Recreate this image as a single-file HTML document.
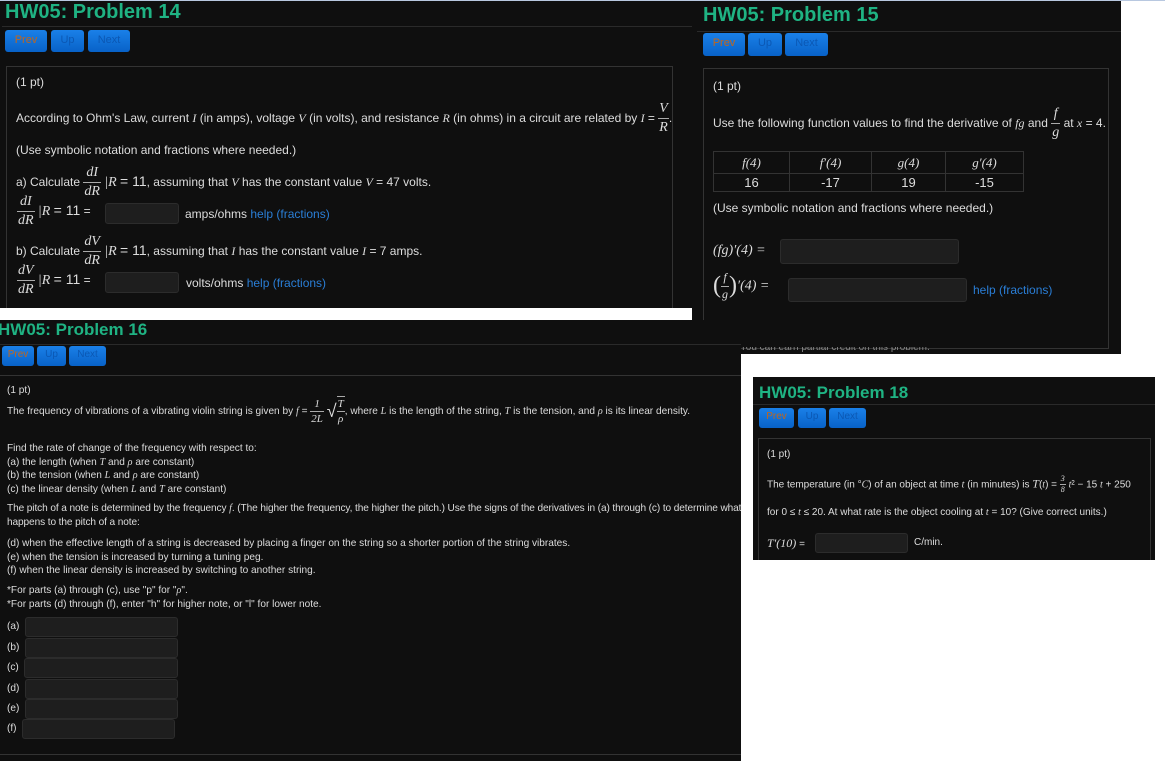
<!DOCTYPE html>
<html><head><meta charset="utf-8"><style>
*{margin:0;padding:0;box-sizing:border-box}
body{width:1165px;height:761px;background:#fff;position:relative;overflow:hidden;font-family:"Liberation Sans",sans-serif;color:#ddd}
.p{position:absolute;background:#0f0f0f}
.a{position:absolute;white-space:nowrap}
.t{position:absolute;color:#1fb383;font-weight:bold;white-space:nowrap}
.hr{position:absolute;height:1px;background:#2a2a2a}
.b{position:absolute;background:linear-gradient(#1a80e8,#0862c8);border-radius:3px;color:#0b58b4;text-align:center}
.b.pr{color:#c0661d}
.box{position:absolute;border:1px solid #333}
.in{position:absolute;background:#1e1e1e;border:1px solid #2c2c2c;border-radius:3px}
.m{font-family:"Liberation Serif",serif;font-style:italic}
.h{color:#2a7ed6}
.fr{display:inline-block;vertical-align:middle;text-align:center;font-family:"Liberation Serif",serif;font-style:italic;line-height:1.3}
.fr span{display:block;padding:0 1px}
.fr span+span{border-top:1px solid #aaa}
table{border-collapse:collapse}
td{border:1px solid #333;text-align:center;color:#ddd}
</style></head><body>
<div style="position:absolute;left:0;top:0;width:1165px;height:1px;background:#b8c8e0"></div>

<!-- Problem 14 -->
<div class="p" style="left:0;top:1px;width:698px;height:307px"></div>
<div class="t" style="left:5px;top:1px;font-size:20px">HW05: Problem 14</div>
<div class="hr" style="left:2px;top:26px;width:694px"></div>
<div class="b pr" style="left:5px;top:30px;width:42px;height:22px;font-size:11px;line-height:20px">Prev</div>
<div class="b" style="left:51px;top:30px;width:33px;height:22px;font-size:11px;line-height:20px">Up</div>
<div class="b" style="left:88px;top:30px;width:42px;height:22px;font-size:11px;line-height:20px">Next</div>
<div class="box" style="left:6px;top:66px;width:667px;height:250px"></div>
<div style="font-size:12px">
<div class="a" style="left:16px;top:75px">(1 pt)</div>
<div class="a" style="left:16px;top:100px">According to Ohm's Law, current <span class="m">I</span> (in amps), voltage <span class="m">V</span> (in volts), and resistance <span class="m">R</span> (in ohms) in a circuit are related by <span class="m">I</span> = <span class="fr" style="font-size:14px"><span>V</span><span>R</span></span>.</div>
<div class="a" style="left:16px;top:143px">(Use symbolic notation and fractions where needed.)</div>
<div class="a" style="left:16px;top:164px">a) Calculate <span class="fr" style="font-size:14px"><span>dI</span><span>dR</span></span> <span class="m" style="font-size:14px">|R</span> <span style="font-size:14px">= 11</span>, assuming that <span class="m">V</span> has the constant value <span class="m">V</span> = 47 volts.</div>
<div class="a" style="left:17px;top:193px"><span class="fr" style="font-size:14px"><span>dI</span><span>dR</span></span> <span class="m" style="font-size:14px">|R</span> <span style="font-size:14px">= 11</span> =</div>
<div class="in" style="left:105px;top:203px;width:74px;height:21px"></div>
<div class="a" style="left:185px;top:207px">amps/ohms <span class="h">help (fractions)</span></div>
<div class="a" style="left:16px;top:233px">b) Calculate <span class="fr" style="font-size:14px"><span>dV</span><span>dR</span></span> <span class="m" style="font-size:14px">|R</span> <span style="font-size:14px">= 11</span>, assuming that <span class="m">I</span> has the constant value <span class="m">I</span> = 7 amps.</div>
<div class="a" style="left:17px;top:262px"><span class="fr" style="font-size:14px"><span>dV</span><span>dR</span></span> <span class="m" style="font-size:14px">|R</span> <span style="font-size:14px">= 11</span> =</div>
<div class="in" style="left:105px;top:272px;width:74px;height:21px"></div>
<div class="a" style="left:186px;top:276px">volts/ohms <span class="h">help (fractions)</span></div>
</div>

<!-- Problem 15 -->
<div class="p" style="left:692px;top:1px;width:429px;height:353px"></div>
<div class="t" style="left:703px;top:4px;font-size:20px">HW05: Problem 15</div>
<div class="hr" style="left:697px;top:31px;width:424px"></div>
<div class="b pr" style="left:703px;top:33px;width:42px;height:23px;font-size:11px;line-height:21px">Prev</div>
<div class="b" style="left:748px;top:33px;width:34px;height:23px;font-size:11px;line-height:21px">Up</div>
<div class="b" style="left:785px;top:33px;width:43px;height:23px;font-size:11px;line-height:21px">Next</div>
<div class="box" style="left:703px;top:68px;width:406px;height:281px"></div>
<div style="font-size:12px">
<div class="a" style="left:713px;top:79px">(1 pt)</div>
<div class="a" style="left:713px;top:105px">Use the following function values to find the derivative of <span class="m">fg</span> and <span class="fr" style="font-size:14px"><span>f</span><span>g</span></span> at <span class="m">x</span> = 4.</div>
<table class="a" style="left:713px;top:151px;width:311px;font-size:13px">
<tr style="height:22px"><td style="width:76px" class="m">f(4)</td><td style="width:82px" class="m">f′(4)</td><td style="width:74px" class="m">g(4)</td><td class="m">g′(4)</td></tr>
<tr style="height:18px"><td>16</td><td>-17</td><td>19</td><td>-15</td></tr></table>
<div class="a" style="left:713px;top:201px">(Use symbolic notation and fractions where needed.)</div>
<div class="a m" style="left:713px;top:243px;font-size:14px">(fg)′(4) =</div>
<div class="in" style="left:780px;top:239px;width:179px;height:25px"></div>
<div class="a m" style="left:713px;top:270px;font-size:14px"><span style="font-size:24px;font-style:normal;vertical-align:middle">(</span><span class="fr" style="font-size:12px"><span>f</span><span>g</span></span><span style="font-size:24px;font-style:normal;vertical-align:middle">)</span>′(4) =</div>
<div class="in" style="left:788px;top:278px;width:179px;height:24px"></div>
<div class="a h" style="left:973px;top:283px">help (fractions)</div>
</div>
<div class="a" style="left:740px;top:347px;width:240px;height:6px;overflow:hidden;font-size:10px;color:#888;line-height:2px">You can earn partial credit on this problem.</div>

<!-- white strip under 14 -->
<div style="position:absolute;left:0;top:308px;width:692px;height:12px;background:#fff"></div>

<!-- Problem 16 -->
<div class="p" style="left:0;top:320px;width:741px;height:441px;overflow:hidden">
<div class="t" style="left:-2px;top:0px;font-size:17px">HW05: Problem 16</div>
<div style="font-size:10.1px">
<div class="a" style="left:7px;top:182px;line-height:13.5px;letter-spacing:-0.1px">The pitch of a note is determined by the frequency <span class="m">f</span>. (The higher the frequency, the higher the pitch.) Use the signs of the derivatives in (a) through (c) to determine what<br>happens to the pitch of a note:</div>
</div>
</div>
<div class="hr" style="left:0;top:344px;width:741px"></div>
<div class="b pr" style="left:2px;top:346px;width:32px;height:20px;font-size:10px;line-height:18px">Prev</div>
<div class="b" style="left:37px;top:346px;width:29px;height:20px;font-size:10px;line-height:18px">Up</div>
<div class="b" style="left:69px;top:346px;width:37px;height:20px;font-size:10px;line-height:18px">Next</div>
<div class="hr" style="left:0;top:375px;width:741px;background:#333"></div>
<div style="font-size:10.1px">
<div class="a" style="left:7px;top:385px">(1 pt)</div>
<div class="a" style="left:7px;top:396px">The frequency of vibrations of a vibrating violin string is given by <span class="m">f</span> = <span class="fr" style="font-size:11px"><span>1</span><span>2L</span></span> <span style="font-size:18px;vertical-align:middle">√</span><span class="fr" style="font-size:11px;border-top:1px solid #aaa"><span>T</span><span class="m">ρ</span></span>, where <span class="m">L</span> is the length of the string, <span class="m">T</span> is the tension, and <span class="m">ρ</span> is its linear density.</div>
<div class="a" style="left:7px;top:442px;line-height:13.5px">Find the rate of change of the frequency with respect to:<br>(a) the length (when <span class="m">T</span> and <span class="m">ρ</span> are constant)<br>(b) the tension (when <span class="m">L</span> and <span class="m">ρ</span> are constant)<br>(c) the linear density (when <span class="m">L</span> and <span class="m">T</span> are constant)</div>
<div class="a" style="left:7px;top:537px;line-height:13.5px">(d) when the effective length of a string is decreased by placing a finger on the string so a shorter portion of the string vibrates.<br>(e) when the tension is increased by turning a tuning peg.<br>(f) when the linear density is increased by switching to another string.</div>
<div class="a" style="left:7px;top:584px;line-height:13.5px">*For parts (a) through (c), use "p" for "<span class="m">ρ</span>".<br>*For parts (d) through (f), enter "h" for higher note, or "l" for lower note.</div>
<div class="a" style="left:7px;top:621px">(a)</div><div class="in" style="left:25px;top:617px;width:153px;height:20px"></div>
<div class="a" style="left:7px;top:642px">(b)</div><div class="in" style="left:25px;top:638px;width:153px;height:20px"></div>
<div class="a" style="left:7px;top:662px">(c)</div><div class="in" style="left:24px;top:658px;width:154px;height:20px"></div>
<div class="a" style="left:7px;top:683px">(d)</div><div class="in" style="left:25px;top:679px;width:153px;height:20px"></div>
<div class="a" style="left:7px;top:703px">(e)</div><div class="in" style="left:25px;top:699px;width:153px;height:20px"></div>
<div class="a" style="left:7px;top:723px">(f)</div><div class="in" style="left:22px;top:719px;width:153px;height:20px"></div>
</div>
<div class="hr" style="left:0;top:754px;width:741px;background:#333"></div>

<!-- Problem 18 -->
<div class="p" style="left:753px;top:377px;width:402px;height:183px;overflow:hidden">
<div class="box" style="left:5px;top:61px;width:393px;height:130px"></div>
</div>
<div class="t" style="left:759px;top:383px;font-size:17px">HW05: Problem 18</div>
<div class="hr" style="left:753px;top:404px;width:402px"></div>
<div class="b pr" style="left:759px;top:408px;width:35px;height:20px;font-size:10px;line-height:18px">Prev</div>
<div class="b" style="left:798px;top:408px;width:28px;height:20px;font-size:10px;line-height:18px">Up</div>
<div class="b" style="left:829px;top:408px;width:37px;height:20px;font-size:10px;line-height:18px">Next</div>
<div style="font-size:10px">
<div class="a" style="left:767px;top:449px">(1 pt)</div>
<div class="a" style="left:767px;top:474px">The temperature (in °<span class="m">C</span>) of an object at time <span class="m">t</span> (in minutes) is <span class="m" style="font-size:12px">T</span>(<span class="m">t</span>) = <span class="fr" style="font-size:8px"><span>3</span><span>8</span></span> <span class="m">t</span>² − 15 <span class="m">t</span> + 250</div>
<div class="a" style="left:767px;top:507px">for 0 ≤ <span class="m">t</span> ≤ 20. At what rate is the object cooling at <span class="m">t</span> = 10? (Give correct units.)</div>
<div class="a" style="left:767px;top:536px"><span class="m" style="font-size:12px">T′(10)</span> =</div>
<div class="in" style="left:815px;top:533px;width:93px;height:20px"></div>
<div class="a" style="left:914px;top:537px">C/min.</div>
</div>
</body></html>
